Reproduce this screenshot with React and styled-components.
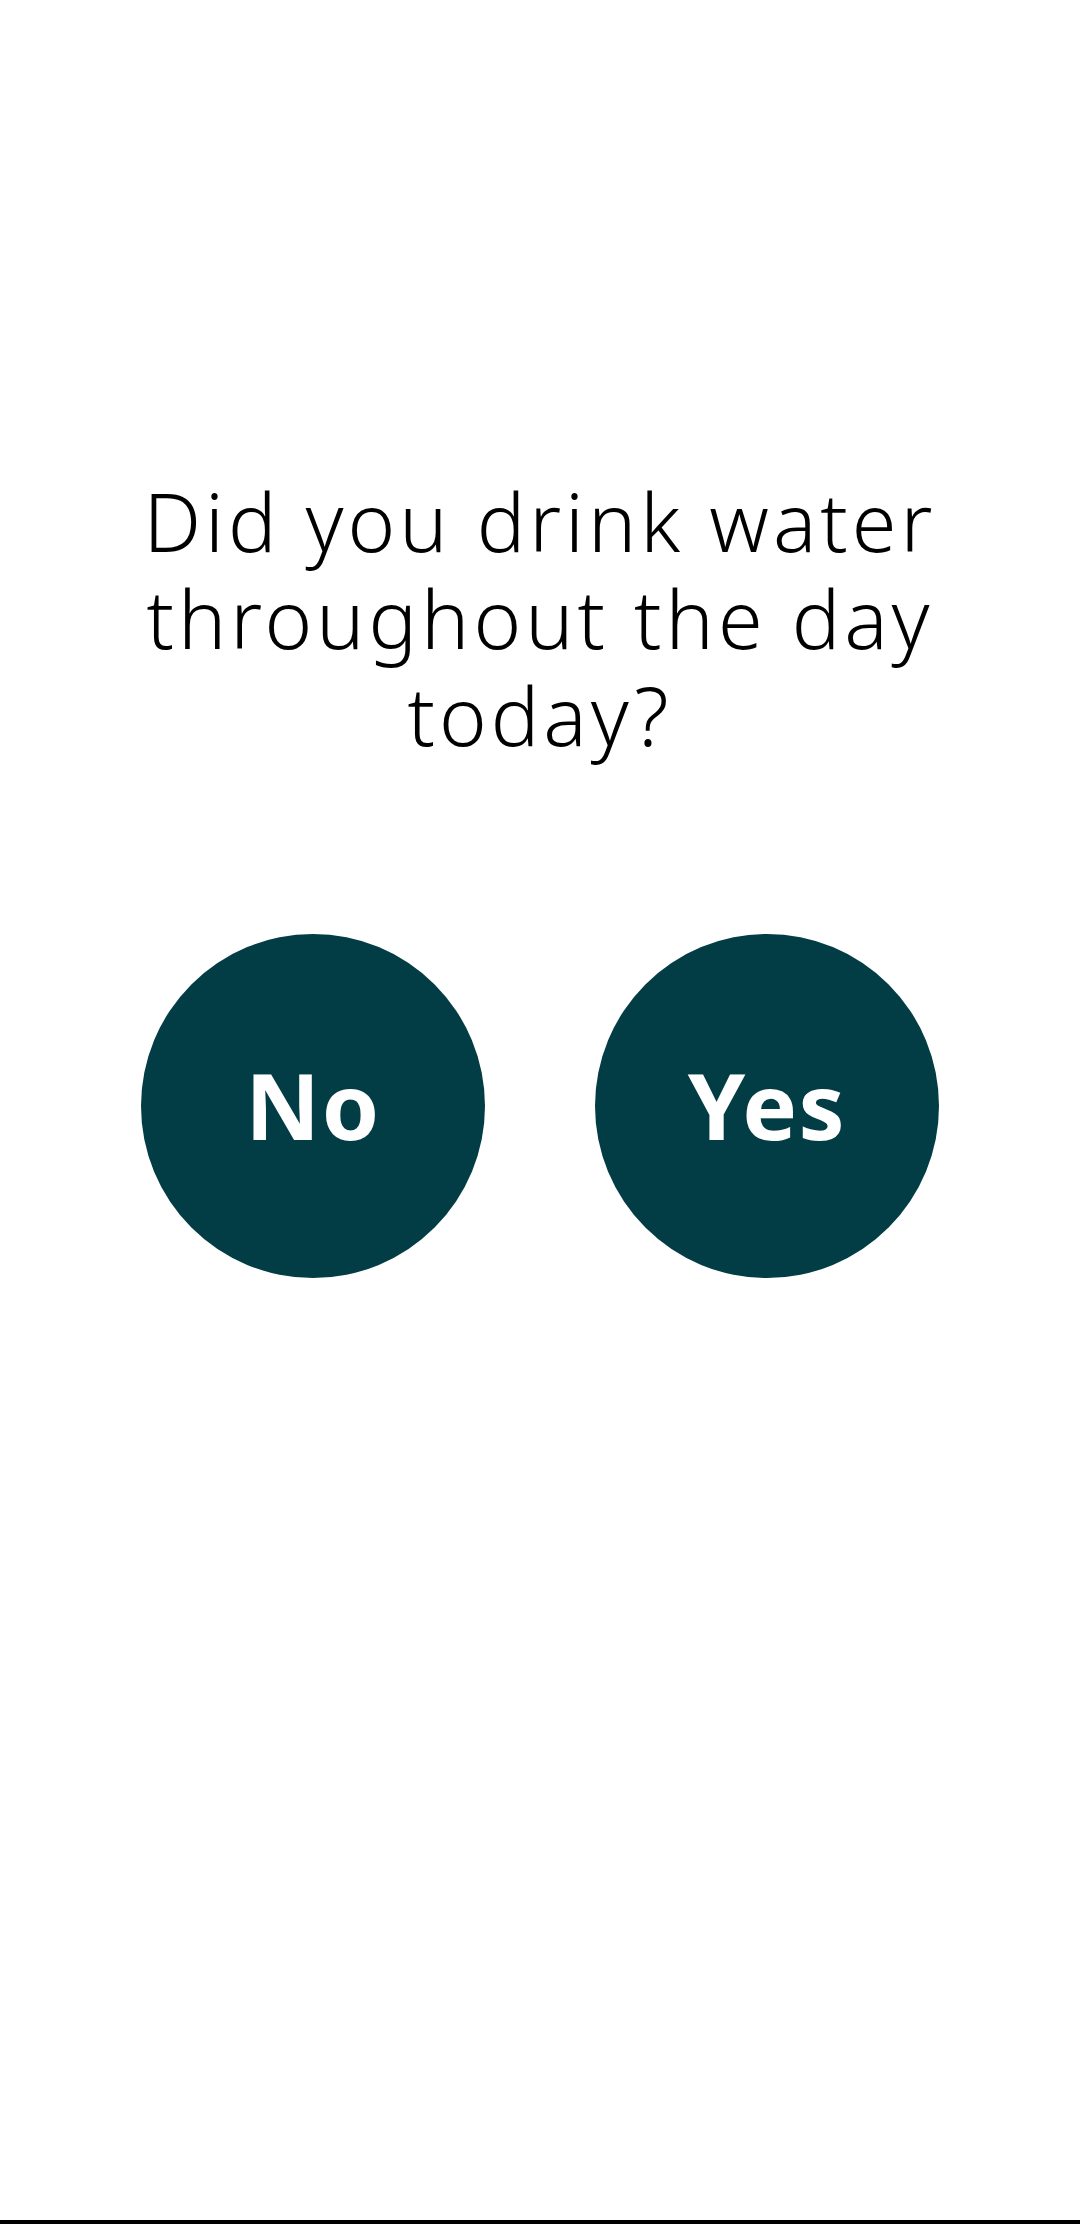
import styled, { createGlobalStyle } from 'styled-components'

const GlobalStyle = createGlobalStyle`
  html, body {
    margin: 0;
    padding: 0;
    background: #ffffff;
  }
  body {
    font-family: "Noto Sans", "DejaVu Sans", sans-serif;
  }
`

const Screen = styled.div`
  height: 2224px;
  box-sizing: border-box;
  display: flex;
  flex-direction: column;
  align-items: center;
  padding-top: 472px;
  border-bottom: 4px solid #000000;
`

const Question = styled.h1`
  margin: 0;
  width: 940px;
  text-align: center;
  font-size: 81px;
  line-height: 97px;
  font-weight: 300;
  letter-spacing: 4px;
  color: #000000;
`

const Choices = styled.div`
  display: flex;
  gap: 110px;
  margin-top: 171px;
`

const Choice = styled.button`
  width: 344px;
  height: 344px;
  border: none;
  border-radius: 50%;
  background: #023d45;
  color: #ffffff;
  font-family: "Noto Sans", "DejaVu Sans", sans-serif;
  font-size: 92px;
  font-weight: 700;
  letter-spacing: 1.5px;
  display: flex;
  align-items: center;
  justify-content: center;
  padding: 0 0 4px;
  cursor: pointer;
`

function App() {
  return (
    <>
      <GlobalStyle />
      <Screen>
        <Question>Did you drink water throughout the day today?</Question>
        <Choices>
          <Choice>No</Choice>
          <Choice>Yes</Choice>
        </Choices>
      </Screen>
    </>
  )
}

export default App
